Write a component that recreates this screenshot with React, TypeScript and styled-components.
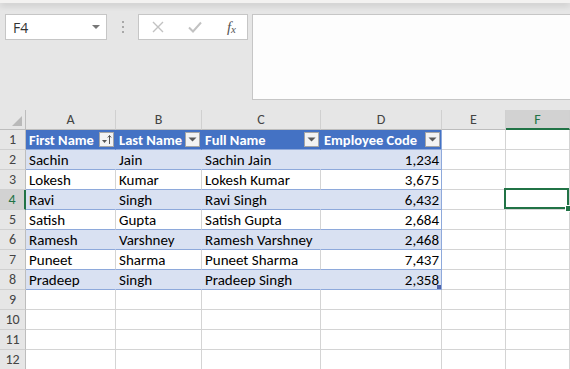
import styled, { createGlobalStyle, css } from "styled-components";

const GlobalStyle = createGlobalStyle`
  body {
    margin: 0;
    font-family: Carlito, Lato, "Liberation Sans", sans-serif;
  }
`;

const columns = ["A", "B", "C", "D", "E", "F"];
const widths = [26, 90, 86, 119, 121, 64, 64];

const headers = ["First Name", "Last Name", "Full Name", "Employee Code"];
const people = [
  ["Sachin", "Jain", "Sachin Jain", "1,234"],
  ["Lokesh", "Kumar", "Lokesh Kumar", "3,675"],
  ["Ravi", "Singh", "Ravi Singh", "6,432"],
  ["Satish", "Gupta", "Satish Gupta", "2,684"],
  ["Ramesh", "Varshney", "Ramesh Varshney", "2,468"],
  ["Puneet", "Sharma", "Puneet Sharma", "7,437"],
  ["Pradeep", "Singh", "Pradeep Singh", "2,358"],
];

const ACTIVE_COL = "F";
const ACTIVE_ROW = 4;

function App() {
  const rows = Array.from({ length: 12 }, (_, i) => i + 1);
  return (
    <>
      <GlobalStyle />
      <Window>
        <TitleStrip />
        <FormulaArea>
          <NameBox>
            <span>F4</span>
            <Caret />
          </NameBox>
          <Grip>
            <i />
            <i />
            <i />
          </Grip>
          <FxButtons>
            <svg width="12" height="12" viewBox="0 0 12 12">
              <path d="M1 1 L11 11 M11 1 L1 11" stroke="#c2c2c2" strokeWidth="1.4" fill="none" />
            </svg>
            <svg width="14" height="12" viewBox="0 0 14 12">
              <path d="M1 6.5 L5 10.5 L13 1.5" stroke="#c2c2c2" strokeWidth="2" fill="none" />
            </svg>
            <FxLabel>
              f<sub>x</sub>
            </FxLabel>
          </FxButtons>
          <FormulaInput />
        </FormulaArea>
        <Sheet $cols={widths}>
          <Corner>
            <svg width="10" height="10" viewBox="0 0 10 10">
              <path d="M10 0 L10 10 L0 10 Z" fill="#b9b9b9" />
            </svg>
          </Corner>
          {columns.map((c) => (
            <ColHead key={c} $active={c === ACTIVE_COL}>
              {c}
            </ColHead>
          ))}
          {rows.map((r) => (
            <Row key={r} r={r} />
          ))}
        </Sheet>
      </Window>
    </>
  );
}

function Row({ r }: { r: number }) {
  const active = r === ACTIVE_ROW;
  let cells;
  if (r === 1) {
    cells = headers.map((h, i) => (
      <HeadCell key={h} $last={i === 3}>
        <span>{h}</span>
        <FilterButton>
          {i === 0 ? (
            <svg width="11" height="11" viewBox="0 0 11 11">
              <path d="M1 6 L6 6 L3.5 9 Z" fill="#555" />
              <path d="M8.5 10 L8.5 1.5 M6.8 3.5 L8.5 1.5 L10.2 3.5" stroke="#555" strokeWidth="1" fill="none" />
            </svg>
          ) : (
            <svg width="9" height="5" viewBox="0 0 9 5">
              <path d="M0.5 0.5 L8.5 0.5 L4.5 4.5 Z" fill="#5a5a5a" />
            </svg>
          )}
        </FilterButton>
      </HeadCell>
    ));
  } else if (r <= 8) {
    const data = people[r - 2];
    const band = r % 2 === 0;
    cells = data.map((v, i) => (
      <DataCell key={i} $band={band} $last={i === 3} $num={i === 3} $handle={i === 3 && r === 8}>
        {v}
      </DataCell>
    ));
  } else {
    cells = [0, 1, 2, 3].map((i) => <Cell key={i} />);
  }
  return (
    <>
      <RowHead $active={active}>{r}</RowHead>
      {cells}
      <Cell />
      <Cell $selected={active} />
    </>
  );
}

const Window = styled.div`
  width: 570px;
  height: 369px;
  overflow: hidden;
  background: #e6e6e6;
  display: flex;
  flex-direction: column;
`;

const TitleStrip = styled.div`
  height: 3px;
  flex: none;
  background: #f3f2f1;
  box-shadow: 0 2px 6px rgba(0, 0, 0, 0.2);
  position: relative;
  z-index: 1;
`;

const FormulaArea = styled.div`
  height: 107px;
  flex: none;
  display: flex;
  align-items: flex-start;
  padding: 11px 0 0 5px;
  box-sizing: border-box;
`;

const boxBorder = css`
  border: 1px solid #c6c6c6;
  background: #fff;
  box-sizing: border-box;
`;

const NameBox = styled.div`
  ${boxBorder}
  width: 102px;
  height: 26px;
  display: flex;
  align-items: center;
  justify-content: space-between;
  padding: 0 6px 0 7px;
  font-family: "Segoe UI", "Open Sans", "Liberation Sans", sans-serif;
  font-size: 14px;
  color: #333;
`;

const Caret = styled.div`
  width: 0;
  height: 0;
  border-left: 4px solid transparent;
  border-right: 4px solid transparent;
  border-top: 4px solid #777;
`;

const Grip = styled.div`
  width: 31px;
  height: 26px;
  display: flex;
  flex-direction: column;
  align-items: center;
  justify-content: center;
  gap: 3px;
  i {
    width: 2px;
    height: 2px;
    background: #a8a8a8;
  }
`;

const FxButtons = styled.div`
  ${boxBorder}
  width: 110px;
  height: 26px;
  display: flex;
  align-items: center;
  justify-content: space-between;
  padding: 0 11px 0 13px;
`;

const FxLabel = styled.span`
  font-family: "Liberation Serif", serif;
  font-style: italic;
  font-size: 15px;
  color: #555;
  sub {
    font-size: 11px;
    vertical-align: -1px;
  }
`;

const FormulaInput = styled.div`
  ${boxBorder}
  border-right: none;
  margin-left: 4px;
  flex: 1;
  height: 86px;
  background: #fdfdfd;
`;

const Sheet = styled.div<{ $cols: number[] }>`
  display: grid;
  grid-template-columns: ${(p) => p.$cols.map((w) => `${w}px`).join(" ")};
  grid-auto-rows: 20px;
  background: #fff;
  font-size: 15px;
  color: #000;
`;

const headBase = css`
  background: #e6e6e6;
  box-sizing: border-box;
  display: flex;
  align-items: center;
  justify-content: center;
  color: #444;
  font-size: 14px;
`;

const Corner = styled.div`
  ${headBase}
  border-right: 1px solid #bdbdbd;
  border-bottom: 1px solid #bdbdbd;
  justify-content: flex-end;
  align-items: flex-end;
  padding: 0 3px 3px 0;
`;

const ColHead = styled.div<{ $active?: boolean }>`
  ${headBase}
  border-right: 1px solid #d0d0d0;
  border-bottom: 1px solid #bdbdbd;
  ${(p) =>
    p.$active &&
    css`
      background: #d2d2d2;
      color: #217346;
      border-bottom: 2px solid #217346;
    `}
`;

const RowHead = styled.div<{ $active?: boolean }>`
  ${headBase}
  border-right: 1px solid #bdbdbd;
  border-bottom: 1px solid #d0d0d0;
  ${(p) =>
    p.$active &&
    css`
      background: #d2d2d2;
      color: #217346;
      border-right: 2px solid #217346;
    `}
`;

const Cell = styled.div<{ $selected?: boolean }>`
  box-sizing: border-box;
  border-right: 1px solid #d4d4d4;
  border-bottom: 1px solid #d4d4d4;
  position: relative;
  ${(p) =>
    p.$selected &&
    css`
      z-index: 2;
      &::after {
        content: "";
        position: absolute;
        top: -2px;
        left: -2px;
        right: 0;
        bottom: 0;
        border: 2px solid #217346;
      }
      &::before {
        content: "";
        position: absolute;
        right: -3px;
        bottom: -3px;
        width: 5px;
        height: 5px;
        background: #217346;
        border: 1px solid #fff;
        z-index: 1;
      }
    `}
`;

const HeadCell = styled.div<{ $last?: boolean }>`
  box-sizing: border-box;
  background: #4472c4;
  color: #fff;
  font-weight: bold;
  font-size: 14.5px;
  border-right: 1px solid ${(p) => (p.$last ? "#8ea9db" : "#4472c4")};
  border-bottom: 1px solid #8ea9db;
  display: flex;
  align-items: center;
  justify-content: space-between;
  gap: 2px;
  padding: 0 1px 0 3px;
  white-space: nowrap;
  overflow: hidden;
`;

const FilterButton = styled.div`
  width: 15px;
  height: 15px;
  flex: none;
  box-sizing: border-box;
  background: #f3f3f3;
  border: 1px solid #a6a6a6;
  display: flex;
  align-items: center;
  justify-content: center;
`;

const DataCell = styled.div<{ $band?: boolean; $last?: boolean; $num?: boolean; $handle?: boolean }>`
  box-sizing: border-box;
  position: relative;
  background: ${(p) => (p.$band ? "#d9e1f2" : "#fff")};
  border-right: 1px solid ${(p) => (p.$last ? "#8ea9db" : p.$band ? "#d9e1f2" : "#d4d4d4")};
  border-bottom: 1px solid #8ea9db;
  display: flex;
  align-items: center;
  justify-content: ${(p) => (p.$num ? "flex-end" : "flex-start")};
  padding: 0 2px 0 3px;
  white-space: nowrap;
  ${(p) =>
    p.$handle &&
    css`
      &::after {
        content: "";
        position: absolute;
        right: 0;
        bottom: 0;
        width: 4px;
        height: 4px;
        background: #4f63a8;
      }
    `}
`;

export default App;
